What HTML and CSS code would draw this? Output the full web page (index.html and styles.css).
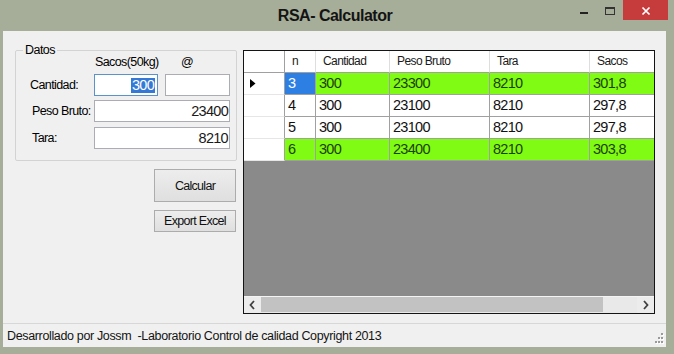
FILE: index.html
```html
<!DOCTYPE html>
<html>
<head>
<meta charset="utf-8">
<title>RSA- Calculator</title>
<link rel="stylesheet" href="styles.css">
</head>
<body>
<div class="window">
  <div class="titlebar">
    <div class="spacer"></div>
    <div class="title">RSA- Calculator</div>
    <div class="controls">
      <span class="ctl min"><svg width="26" height="20" viewBox="0 0 26 20"><rect x="9" y="12" width="8" height="2" fill="#222"/></svg></span>
      <span class="ctl max"><svg width="26" height="20" viewBox="0 0 26 20"><rect x="8.5" y="7.5" width="9" height="7" fill="none" stroke="#333" stroke-width="1"/><rect x="8" y="7" width="10" height="2" fill="#333"/></svg></span>
      <span class="ctl close"><svg width="45" height="20" viewBox="0 0 45 20"><path d="M19.5 7.5 L26.5 14.5 M26.5 7.5 L19.5 14.5" stroke="#fff" stroke-width="1.7"/></svg></span>
    </div>
  </div>
  <div class="client">
    <div class="main">
      <div class="leftpanel">
        <div class="groupbox">
          <span class="legend">Datos</span>
          <div class="form">
            <span></span>
            <span class="colhead sacos">Sacos(50kg)</span>
            <span class="colhead at">@</span>
            <span class="lbl">Cantidad:</span>
            <div class="tb focus"><span class="sel">300</span></div>
            <div class="tb small2"></div>
            <span class="lbl indent">Peso Bruto:</span>
            <div class="tb wide">23400</div>
            <span class="lbl indent last">Tara:</span>
            <div class="tb wide last">8210</div>
          </div>
        </div>
        <button class="btn calc">Calcular</button>
        <button class="btn export">Export Excel</button>
      </div>
      <div class="grid">
        <div class="gridview">
          <div class="rows">
            <div class="cell rh hdr"></div>
            <div class="cell hdr">n</div>
            <div class="cell hdr">Cantidad</div>
            <div class="cell hdr">Peso Bruto</div>
            <div class="cell hdr">Tara</div>
            <div class="cell hdr">Sacos</div>

            <div class="cell rh"><svg width="6" height="9" viewBox="0 0 6 9"><path d="M0 0 L5.5 4.5 L0 9 Z" fill="#000"/></svg></div>
            <div class="cell selected">3</div>
            <div class="cell green">300</div>
            <div class="cell green">23300</div>
            <div class="cell green">8210</div>
            <div class="cell green">301,8</div>

            <div class="cell rh"></div>
            <div class="cell">4</div>
            <div class="cell">300</div>
            <div class="cell">23100</div>
            <div class="cell">8210</div>
            <div class="cell">297,8</div>

            <div class="cell rh"></div>
            <div class="cell">5</div>
            <div class="cell">300</div>
            <div class="cell">23100</div>
            <div class="cell">8210</div>
            <div class="cell">297,8</div>

            <div class="cell rh"></div>
            <div class="cell green">6</div>
            <div class="cell green">300</div>
            <div class="cell green">23400</div>
            <div class="cell green">8210</div>
            <div class="cell green">303,8</div>
          </div>
        </div>
        <div class="hscroll">
          <span class="arrow"><svg width="17" height="16" viewBox="0 0 17 16"><path d="M10 4 L6.5 8 L10 12" fill="none" stroke="#404040" stroke-width="1.8"/></svg></span>
          <span class="thumb"></span>
          <span class="track"></span>
          <span class="arrow"><svg width="17" height="16" viewBox="0 0 17 16"><path d="M7 4 L10.5 8 L7 12" fill="none" stroke="#404040" stroke-width="1.8"/></svg></span>
        </div>
      </div>
    </div>
    <div class="status">
      <span class="status-text">Desarrollado por Jossm &nbsp;-Laboratorio Control de calidad Copyright 2013</span>
      <svg class="grip" width="12" height="12" viewBox="0 0 12 12">
        <g fill="#fff">
          <rect x="9" y="1" width="2" height="2"/>
          <rect x="6" y="5" width="2" height="2"/><rect x="9" y="5" width="2" height="2"/>
          <rect x="3" y="9" width="2" height="2"/><rect x="6" y="9" width="2" height="2"/><rect x="9" y="9" width="2" height="2"/>
        </g>
        <g fill="#9a9a9a">
          <rect x="8" y="0" width="2" height="2"/>
          <rect x="5" y="4" width="2" height="2"/><rect x="8" y="4" width="2" height="2"/>
          <rect x="2" y="8" width="2" height="2"/><rect x="5" y="8" width="2" height="2"/><rect x="8" y="8" width="2" height="2"/>
        </g>
      </svg>
    </div>
  </div>
</div>
</body>
</html>
```

FILE: styles.css
```css
* { box-sizing: border-box; }

html, body {
  margin: 0;
  padding: 0;
  background: #a6ad98;
}

body {
  font-family: "Liberation Sans", Arial, sans-serif;
  color: #000;
}

.window {
  width: 674px;
  height: 354px;
  background: #a6ad98;
  display: flex;
  flex-direction: column;
  overflow: hidden;
}

/* ---------- title bar ---------- */
.titlebar {
  height: 31px;
  flex: none;
  display: grid;
  grid-template-columns: 1fr auto 1fr;
}

.title {
  font-weight: bold;
  font-size: 16px;
  letter-spacing: -0.5px;
  color: #141414;
  line-height: 32px;
  padding-right: 4px;
}

.controls {
  justify-self: end;
  align-self: start;
  display: flex;
  margin-right: 6px;
}

.ctl {
  display: flex;
  height: 20px;
}

.ctl svg { display: block; }

.close {
  background: #c63b3b;
}

/* ---------- client area ---------- */
.client {
  flex: 1;
  margin: 0 8px 7px 3px;
  background: #f0f0f0;
  display: flex;
  flex-direction: column;
}

.main {
  flex: 1;
  display: flex;
  padding: 19px 11px 0 12px;
  gap: 6px;
}

.leftpanel {
  width: 222px;
  display: flex;
  flex-direction: column;
  align-items: flex-end;
}

.groupbox {
  position: relative;
  width: 222px;
  height: 111px;
  border: 1px solid #d3d3d3;
  border-radius: 2px;
}

.legend {
  position: absolute;
  top: -8px;
  left: 7px;
  padding: 0 2px;
  background: #f0f0f0;
  font-size: 12.5px;
  letter-spacing: -0.55px;
  line-height: 15px;
}

.form {
  display: grid;
  grid-template-columns: 64px 64px 72px;
  grid-template-rows: 15px 22px 22px 22px;
  row-gap: 4px;
  padding: 4px 6px 0 14px;
  font-size: 12.5px;
  letter-spacing: -0.6px;
}

.colhead {
  line-height: 15px;
}

.sacos { padding-left: 1px; }

.at {
  padding-left: 23px;
}

.lbl {
  display: flex;
  align-items: center;
  height: 22px;
}

.lbl.indent { padding-left: 2px; }

.last { margin-top: 1px; }

.tb {
  height: 22px;
  background: #fff;
  border: 1px solid #abadb3;
  text-align: right;
  padding-right: 1px;
  font-size: 14.5px;
  letter-spacing: -0.7px;
  line-height: 20px;
  color: #1a1a1a;
}

.tb.focus {
  border-color: #5b93c8;
  padding-right: 2px;
}

.tb.small2 {
  width: 65px;
  justify-self: end;
}

.tb.wide {
  grid-column: 2 / 4;
}

.sel {
  display: inline-block;
  background: #3479d6;
  color: #fff;
  line-height: 15px;
  padding: 0 1px;
}

.btn {
  font-family: "Liberation Sans", Arial, sans-serif;
  font-size: 12.5px;
  letter-spacing: -0.7px;
  color: #111;
  width: 82px;
  margin: 8px 1px 0 0;
  padding: 0;
  border: 1px solid #acacac;
  background: linear-gradient(#ededed, #dfdfdf);
}

.btn.calc { height: 33px; }
.btn.export { height: 22px; }

/* ---------- data grid ---------- */
.grid {
  width: 412px;
  height: 264px;
  border: 1px solid #141414;
  display: flex;
  flex-direction: column;
}

.gridview {
  flex: 1;
  background: #8a8a8a;
  overflow: hidden;
}

.rows {
  display: grid;
  grid-template-columns: 41px 31px 74px 100px 100px 100px;
  grid-auto-rows: 22px;
  width: 446px;
}

.cell {
  border-right: 1px solid #a0a0a0;
  border-bottom: 1px solid #a0a0a0;
  background: #fff;
  font-size: 14.5px;
  letter-spacing: -0.7px;
  line-height: 21px;
  padding-left: 3px;
  color: #111;
  white-space: nowrap;
  overflow: hidden;
}

.cell.hdr {
  font-size: 12px;
  letter-spacing: -0.6px;
  padding-left: 7px;
  border-right-color: #dedede;
  border-bottom-color: #a0a0a0;
  color: #1a1a1a;
}

.cell.hdr:first-child { border-right-color: #a0a0a0; }

.cell.rh {
  border-bottom-color: #e6e6e6;
  display: flex;
  align-items: center;
  padding-left: 6px;
}

.cell.rh.hdr { border-bottom-color: #a0a0a0; }

.cell.rh svg { display: block; }

.cell.green {
  background: #80fb14;
  color: #1f3f08;
}

.cell.selected {
  background: #2e7fe4;
  color: #fff;
}

.hscroll {
  height: 17px;
  flex: none;
  display: flex;
  background: #e9e9e9;
  border-top: 1px solid #f4f4f4;
}

.arrow {
  width: 17px;
  display: flex;
  align-items: center;
  background: #ececec;
}

.arrow svg { display: block; }

.thumb {
  width: 342px;
  background: #c2c2c2;
  margin: 0 0 1px;
}

.track {
  flex: 1;
}

/* ---------- status strip ---------- */
.status {
  height: 24px;
  flex: none;
  border-top: 1px solid #d7d7d7;
  display: flex;
  align-items: center;
  padding: 0 1px 0 4px;
}

.status-text {
  font-size: 12.5px;
  letter-spacing: -0.35px;
  color: #141414;
}

.grip {
  margin-left: auto;
  margin-top: 6px;
  display: block;
}
```
